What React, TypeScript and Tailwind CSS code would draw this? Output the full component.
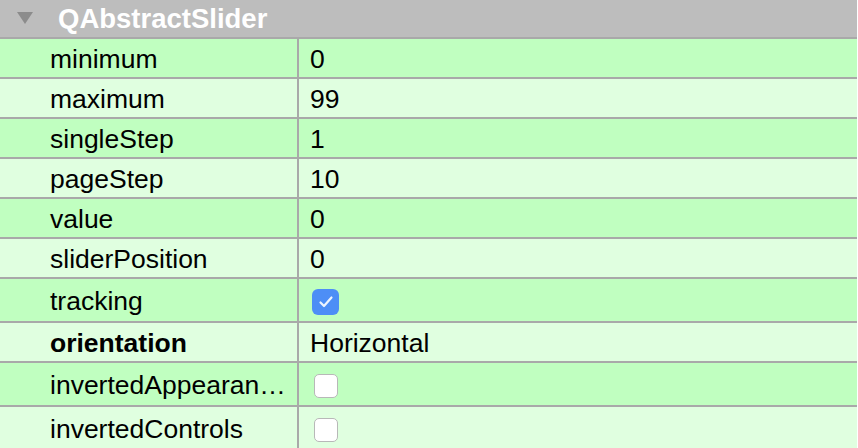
import React from "react";

type Row = { name: string; value?: string; check?: "on" | "off"; bold?: boolean };

const rows: Row[] = [
  { name: "minimum", value: "0" },
  { name: "maximum", value: "99" },
  { name: "singleStep", value: "1" },
  { name: "pageStep", value: "10" },
  { name: "value", value: "0" },
  { name: "sliderPosition", value: "0" },
  { name: "tracking", check: "on" },
  { name: "orientation", value: "Horizontal", bold: true },
  { name: "invertedAppearan…", check: "off" },
  { name: "invertedControls", check: "off" },
];

function Check({ on }: { on: boolean }) {
  if (on) {
    return (
      <div className="ml-[2px] mt-[1px] flex h-[26px] w-[27px] items-center justify-center rounded-[6px] bg-[#4d8ef6]">
        <svg width="16" height="14" viewBox="0 0 16 14">
          <path d="M2.5 7.5 L6 11 L13.5 2.5" fill="none" stroke="#ffffff" strokeWidth="2.2" strokeLinecap="round" strokeLinejoin="round" opacity="0.9" />
        </svg>
      </div>
    );
  }
  return <div className="ml-[4px] h-[24px] w-[24px] rounded-[5px] border border-[#b8b8b8] bg-white" />;
}

export default function App() {
  return (
    <div className="w-[857px] h-[448px] overflow-hidden bg-white" style={{ fontFamily: '"Liberation Sans", Arial, sans-serif' }}>
      <div className="flex h-[39px] items-center border-b-2 border-[#a9a9a9] bg-[#bdbdbd]">
        <svg className="ml-[17px]" width="16" height="13" viewBox="0 0 16 13">
          <path d="M0 0 L16 0 L8 12 Z" fill="#8c8c8c" />
        </svg>
        <span className="ml-[25px] mt-[1px] text-[27.5px] font-bold leading-none text-white">QAbstractSlider</span>
      </div>
      {rows.map((r, i) => (
        <div
          key={r.name}
          className={`flex border-b-2 border-[#a9a9a9] ${i % 2 === 0 ? "bg-[#c0ffc0]" : "bg-[#e0ffe0]"} ${r.check ? "h-[44px]" : "h-[40px]"}`}
        >
          <div className={`flex w-[299px] items-center border-r-2 border-[#a9a9a9] pl-[50px] pt-[3px] text-[26.5px] leading-none text-black ${r.bold ? "font-bold" : ""}`}>
            {r.name}
          </div>
          <div className="flex flex-1 items-center pl-[11px] pt-[3px] text-[26.5px] leading-none text-black">
            {r.check ? <Check on={r.check === "on"} /> : r.value}
          </div>
        </div>
      ))}
    </div>
  );
}
